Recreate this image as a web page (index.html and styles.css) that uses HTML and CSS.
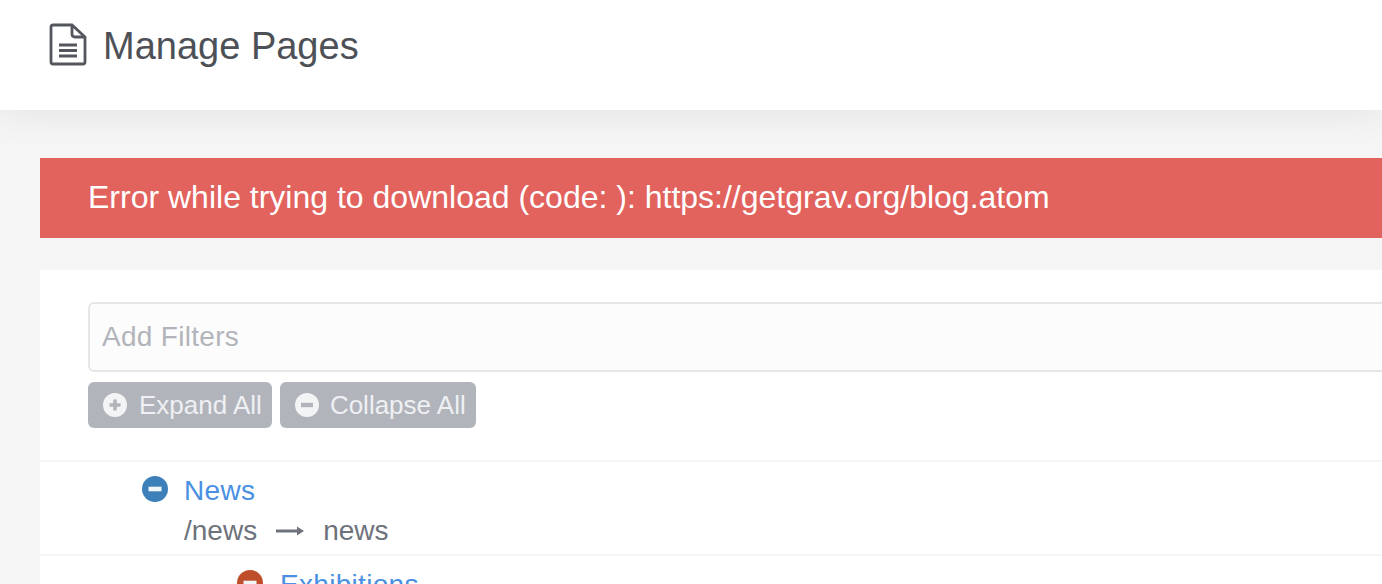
FILE: index.html
```html
<!DOCTYPE html>
<html lang="en">
<head>
<meta charset="utf-8">
<title>Manage Pages</title>
<link rel="stylesheet" href="styles.css">
</head>
<body>
<header class="titlebar">
  <svg class="title-icon" width="40" height="44" viewBox="0 0 40 44" fill="none" stroke="#53565c">
    <path d="M24 2H5Q3 2 3 4V39Q3 41 5 41H35Q37 41 37 39V14Z" stroke-width="2.800"/>
    <path d="M24 2V11Q24 14 27 14H37" stroke-width="2.800"/>
    <path d="M11 22H29M11 27.500H29M11 33H29" stroke-width="2.800"/>
  </svg>
  <h1 class="title">Manage Pages</h1>
</header>
<main class="content">
  <div class="alert">Error while trying to download (code: ): https://getgrav.org/blog.atom</div>
  <section class="card">
    <div class="filters">
      <div class="filter-input">Add Filters</div>
      <div class="buttons">
        <button class="btn" type="button">
          <svg class="btn-icon" viewBox="0 0 24 24"><circle cx="12" cy="12" r="12" fill="#f3f4f6"/><path d="M12 6.500V17.500M6.500 12H17.500" stroke="#b2b4bb" stroke-width="3.600"/></svg>
          Expand All
        </button>
        <button class="btn btn-collapse" type="button">
          <svg class="btn-icon" viewBox="0 0 24 24"><circle cx="12" cy="12" r="12" fill="#f3f4f6"/><path d="M6 12H18" stroke="#b2b4bb" stroke-width="4.400"/></svg>
          Collapse All
        </button>
      </div>
    </div>
    <ul class="tree">
      <li class="row">
        <svg class="toggle" viewBox="0 0 26 26"><circle cx="13" cy="13" r="13" fill="#3d7fb8"/><path d="M6.500 13H19.500" stroke="#f3f6f9" stroke-width="4.600"/></svg>
        <div class="info">
          <a class="page-link" href="#">News</a>
          <div class="route"><span>/news</span>
            <svg class="arrow" width="28" height="12" viewBox="0 0 28 12"><path d="M0 6H22" stroke="#6d727b" stroke-width="3"/><path d="M21 1.500L28 6L21 10.500Z" fill="#6d727b"/></svg>
            <span>news</span></div>
        </div>
      </li>
      <li class="row row-child">
        <svg class="toggle" viewBox="0 0 26 26"><circle cx="13" cy="13" r="13" fill="#bf4f2b"/><path d="M6.500 13H19.500" stroke="#f3f6f9" stroke-width="4.600"/></svg>
        <div class="info">
          <a class="page-link" href="#">Exhibitions</a>
        </div>
      </li>
    </ul>
  </section>
</main>
</body>
</html>
```

FILE: styles.css
```css
* { box-sizing: border-box; }
html, body { margin: 0; height: 100%; overflow: hidden; }
body {
  background: #f5f5f5;
  font-family: "Liberation Sans", Arial, sans-serif;
  color: #6d727b;
}
.titlebar {
  height: 110px;
  background: #fff;
  display: flex;
  align-items: flex-start;
  padding: 23px 0 0 48px;
  gap: 15px;
  box-shadow: 0 0 40px rgba(0, 0, 0, 0.09);
  position: relative;
}
.title-icon { flex: none; }
.title {
  margin: 0;
  font-size: 38px;
  line-height: 46px;
  font-weight: 400;
  color: #4d5157;
}
.content { padding: 48px 0 0 40px; width: 1500px; }
.alert {
  height: 80px;
  background: #e2625e;
  color: #fff;
  font-size: 32px;
  line-height: 78px;
  padding-left: 48px;
}
.card { margin-top: 32px; background: #fff; height: 400px; }
.filters { padding: 32px 0 32px 48px; }
.filter-input {
  height: 70px;
  border: 2px solid #e6e6e6;
  border-radius: 6px;
  background: #fcfcfc;
  color: #b2b4bb;
  font-size: 28px;
  letter-spacing: 0.3px;
  line-height: 66px;
  padding-left: 12px;
}
.buttons { display: flex; gap: 8px; margin-top: 10px; }
.btn {
  height: 46px;
  border: 0;
  border-radius: 6px;
  background: #b2b4bb;
  color: #eef0f3;
  font: 400 26px/44px "Liberation Sans", Arial, sans-serif;
  padding: 0 10px 0 15px;
  display: flex;
  align-items: center;
  gap: 12px;
}
.btn-collapse { gap: 11px; }
.btn-icon { width: 24px; height: 24px; flex: none; }
.tree { list-style: none; margin: 0; padding: 0; }
.row {
  display: flex;
  align-items: flex-start;
  gap: 16px;
  border-top: 2px solid #f5f5f5;
  height: 94px;
  padding: 9px 0 0 102px;
}
.row-child { padding-left: 197px; gap: 17px; }
.toggle { width: 26px; height: 26px; flex: none; margin-top: 5px; }
.info { font-size: 28px; line-height: 40px; }
.page-link { color: #4a90e2; text-decoration: none; display: block; letter-spacing: 0.3px; }
.route { color: #6d727b; display: flex; align-items: center; }
.arrow { margin: 0 19px; flex: none; }
```
